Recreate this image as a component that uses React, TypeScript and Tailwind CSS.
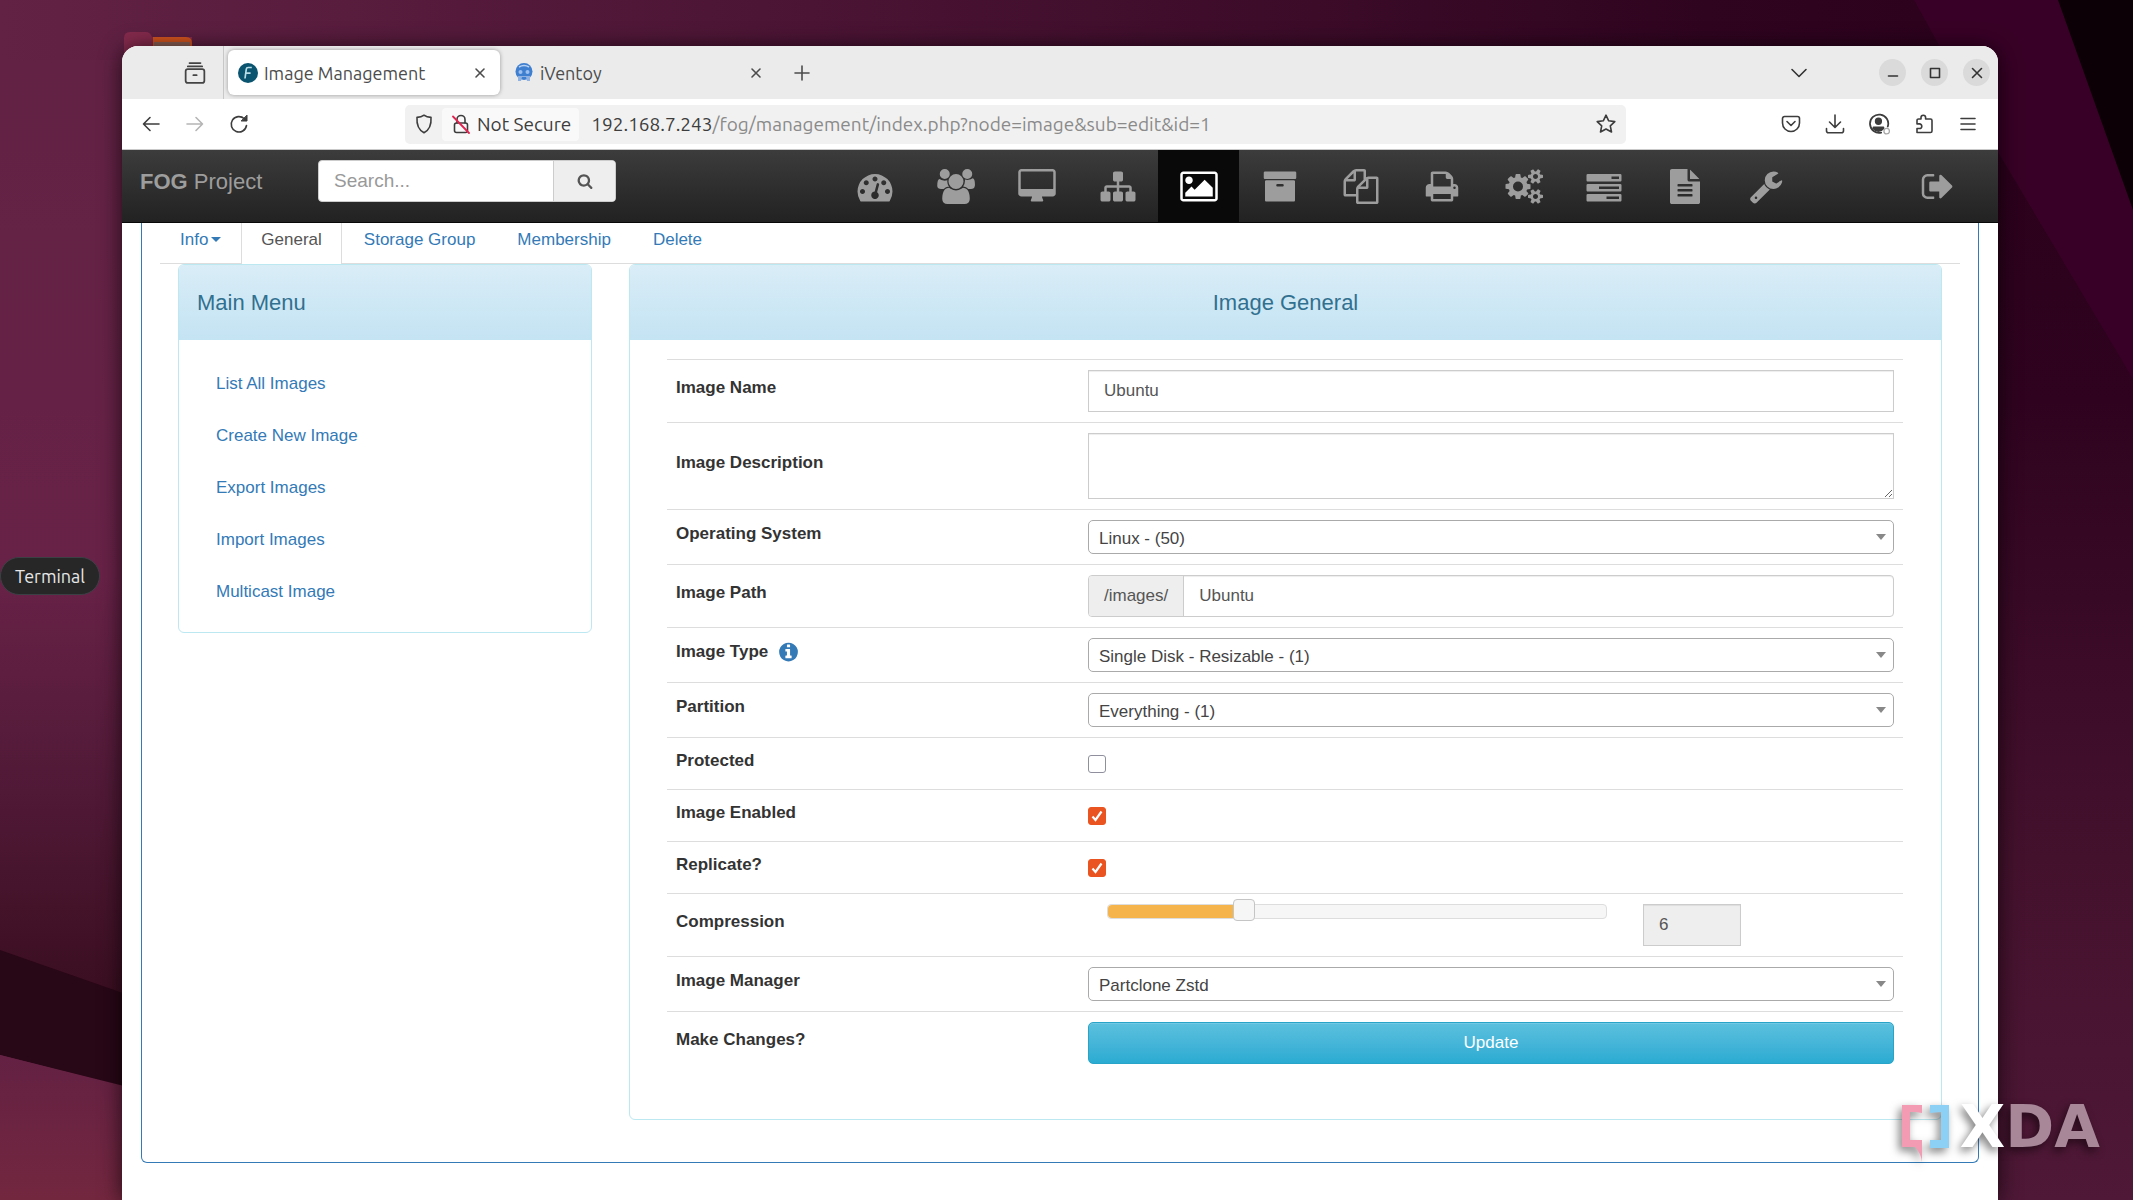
import { useState } from "react";
import type { ReactNode } from "react";

type NavItem = { label: string; path: string };

const navItems: NavItem[] = [
  {
    label: "Dashboard",
    path: "M384 1152q0-53-37.5-90.5t-90.5-37.5-90.5 37.5-37.5 90.5 37.5 90.5 90.5 37.5 90.5-37.5 37.5-90.5zm192-448q0-53-37.5-90.5t-90.5-37.5-90.5 37.5-37.5 90.5 37.5 90.5 90.5 37.5 90.5-37.5 37.5-90.5zm428 481l101-382q6-26-7.5-48.5t-38.5-29.5-48 6.5-30 39.5l-101 382q-60 5-107 43.5t-63 98.5q-20 77 20 146t117 89 146-20 89-117q16-60-6-117t-72-91zm660-33q0-53-37.5-90.5t-90.5-37.5-90.5 37.5-37.5 90.5 37.5 90.5 90.5 37.5 90.5-37.5 37.5-90.5zm-640-640q0-53-37.5-90.5t-90.5-37.5-90.5 37.5-37.5 90.5 37.5 90.5 90.5 37.5 90.5-37.5 37.5-90.5zm448 192q0-53-37.5-90.5t-90.5-37.5-90.5 37.5-37.5 90.5 37.5 90.5 90.5 37.5 90.5-37.5 37.5-90.5zm320 448q0 261-141 483-19 29-54 29h-1402q-35 0-54-29-141-221-141-483 0-182 71-348t191-286 286-191 348-71 348 71 286 191 191 286 71 348z",
  },
  {
    label: "Users",
    path: "M529 896q-162 5-265 128h-134q-82 0-138-40.5t-56-118.5q0-353 124-353 6 0 43.5 21t97.5 42.5 119 21.5q67 0 133-23-5 37-5 66 0 159 93 290zm1071 637q0 120-73 189.5t-194 69.5h-874q-121 0-194-69.5t-73-189.5q0-53 3.5-103.5t14-109 26.5-108.5 43-97.5 62-81 85.5-53.5 111.5-20q10 0 43 21.5t73 48 107 48 135 21.5 135-21.5 107-48 73-48 43-21.5q61 0 111.5 20t85.5 53.5 62 81 43 97.5 26.5 108.5 14 109 3.5 103.5zm-1024-1277q0 106-75 181t-181 75-181-75-75-181 75-181 181-75 181 75 75 181zm704 384q0 159-112.5 271.5t-271.5 112.5-271.5-112.5-112.5-271.5 112.5-271.5 271.5-112.5 271.5 112.5 112.5 271.5zm576 225q0 78-56 118.5t-138 40.5h-134q-103-123-265-128 93-131 93-290 0-29-5-66 66 23 133 23 59 0 119-21.5t97.5-42.5 43.5-21q124 0 124 353zm-128-609q0 106-75 181t-181 75-181-75-75-181 75-181 181-75 181 75 75 181z",
  },
  {
    label: "Hosts",
    path: "M1728 992v-832q0-13-9.5-22.5t-22.5-9.5h-1600q-13 0-22.5 9.5t-9.5 22.5v832q0 13 9.5 22.5t22.5 9.5h1600q13 0 22.5-9.5t9.5-22.5zm128-832v1088q0 66-47 113t-113 47h-544q0 37 16 77.5t32 71 16 43.5q0 26-19 45t-45 19h-512q-26 0-45-19t-19-45q0-14 16-44t32-70 16-78h-544q-66 0-113-47t-47-113v-1088q0-66 47-113t113-47h1600q66 0 113 47t47 113z",
  },
  {
    label: "Groups",
    path: "M1792 1248v320q0 40-28 68t-68 28h-320q-40 0-68-28t-28-68v-320q0-40 28-68t68-28h96v-192h-512v192h96q40 0 68 28t28 68v320q0 40-28 68t-68 28h-320q-40 0-68-28t-28-68v-320q0-40 28-68t68-28h96v-192h-512v192h96q40 0 68 28t28 68v320q0 40-28 68t-68 28h-320q-40 0-68-28t-28-68v-320q0-40 28-68t68-28h96v-192q0-52 38-90t90-38h512v-192h-96q-40 0-68-28t-28-68v-320q0-40 28-68t68-28h320q40 0 68 28t28 68v320q0 40-28 68t-68 28h-96v192h512q52 0 90 38t38 90v192h96q40 0 68 28t28 68z",
  },
  {
    label: "Images",
    path: "M576 576q0 80-56 136t-136 56-136-56-56-136 56-136 136-56 136 56 56 136zm1024 384v448h-1408v-192l320-320 160 160 512-512zm96-704h-1600q-13 0-22.5 9.5t-9.5 22.5v1216q0 13 9.5 22.5t22.5 9.5h1600q13 0 22.5-9.5t9.5-22.5v-1216q0-13-9.5-22.5t-22.5-9.5zm160 32v1216q0 66-47 113t-113 47h-1600q-66 0-113-47t-47-113v-1216q0-66 47-113t113-47h1600q66 0 113 47t47 113z",
  },
  {
    label: "Storage",
    path: "M1088 832q0-26-19-45t-45-19h-256q-26 0-45 19t-19 45 19 45 45 19h256q26 0 45-19t19-45zm576-192v960q0 26-19 45t-45 19h-1408q-26 0-45-19t-19-45v-960q0-26 19-45t45-19h1408q26 0 45 19t19 45zm64-448v256q0 26-19 45t-45 19h-1536q-26 0-45-19t-19-45v-256q0-26 19-45t45-19h1536q26 0 45 19t19 45z",
  },
  {
    label: "Snapins",
    path: "M1696 384q40 0 68 28t28 68v1216q0 40-28 68t-68 28h-960q-40 0-68-28t-28-68v-288h-544q-40 0-68-28t-28-68v-672q0-40 20-88t48-76l408-408q28-28 76-48t88-20h416q40 0 68 28t28 68v328q68-40 128-40h416zm-544 213l-299 299h299v-299zm-640-384l-299 299h299v-299zm196 647l316-316v-416h-384v416q0 40-28 68t-68 28h-416v640h512v-256q0-40 20-88t48-76zm956 804v-1152h-384v416q0 40-28 68t-68 28h-416v640h896z",
  },
  {
    label: "Printers",
    path: "M448 1536h896v-256h-896v256zm0-640h896v-384h-160q-40 0-68-28t-28-68v-160h-640v640zm1152 64q0-26-19-45t-45-19-45 19-19 45 19 45 45 19 45-19 19-45zm128 0v416q0 13-9.5 22.5t-22.5 9.5h-224v160q0 40-28 68t-68 28h-960q-40 0-68-28t-28-68v-160h-224q-13 0-22.5-9.5t-9.5-22.5v-416q0-79 56.5-135.5t135.5-56.5h64v-544q0-40 28-68t68-28h672q40 0 88 20t76 48l152 152q28 28 48 76t20 88v256h64q79 0 135.5 56.5t56.5 135.5z",
  },
  {
    label: "Services",
    path: "M896 896q0-106-75-181t-181-75-181 75-75 181 75 181 181 75 181-75 75-181zm768 512q0-52-38-90t-90-38-90 38-38 90q0 53 37.5 90.5t90.5 37.5 90.5-37.5 37.5-90.5zm0-1024q0-52-38-90t-90-38-90 38-38 90q0 53 37.5 90.5t90.5 37.5 90.5-37.5 37.5-90.5zm-384 421v185q0 10-7 19.5t-16 10.5l-155 24q-11 35-32 76 34 48 90 115 7 11 7 20 0 12-7 19-23 30-82.5 89.5t-78.5 59.5q-11 0-21-7l-115-90q-37 19-77 31-11 108-23 155-7 24-30 24h-186q-11 0-20-7.5t-10-17.5l-23-153q-34-10-75-31l-118 89q-7 7-20 7-11 0-21-8-144-133-144-160 0-9 7-19 10-14 41-53t47-61q-23-44-35-82l-152-24q-10-1-17-9.5t-7-19.5v-185q0-10 7-19.5t16-10.5l155-24q11-35 32-76-34-48-90-115-7-11-7-20 0-12 7-20 22-30 82-89t79-59q11 0 21 7l115 90q34-18 77-32 11-108 23-154 7-24 30-24h186q11 0 20 7.5t10 17.5l23 153q34 10 75 31l118-89q8-7 20-7 11 0 21 8 144 133 144 160 0 8-7 19-12 16-42 54t-45 60q23 48 34 82l152 23q10 2 17 10.5t7 19.5zm640 533v140q0 16-149 31-12 27-30 52 51 113 51 138 0 4-4 7-122 71-124 71-8 0-46-47t-52-68q-20 2-30 2t-30-2q-14 21-52 68t-46 47q-2 0-124-71-4-3-4-7 0-25 51-138-18-25-30-52-149-15-149-31v-140q0-16 149-31 13-29 30-52-51-113-51-138 0-4 4-7 4-2 35-20t59-34 30-16q8 0 46 46.5t52 67.5q20-2 30-2t30 2q51-71 92-112l6-2q4 0 124 70 4 3 4 7 0 25-51 138 17 23 30 52 149 15 149 31zm0-1024v140q0 16-149 31-12 27-30 52 51 113 51 138 0 4-4 7-122 71-124 71-8 0-46-47t-52-68q-20 2-30 2t-30-2q-14 21-52 68t-46 47q-2 0-124-71-4-3-4-7 0-25 51-138-18-25-30-52-149-15-149-31v-140q0-16 149-31 13-29 30-52-51-113-51-138 0-4 4-7 4-2 35-20t59-34 30-16q8 0 46 46.5t52 67.5q20-2 30-2t30 2q51-71 92-112l6-2q4 0 124 70 4 3 4 7 0 25-51 138 17 23 30 52 149 15 149 31z",
  },
  {
    label: "Tasks",
    path: "M1024 1536h640v-128h-640v128zm-384-512h1024v-128h-1024v128zm640-512h384v-128h-384v128zm512 832v256q0 26-19 45t-45 19h-1664q-26 0-45-19t-19-45v-256q0-26 19-45t45-19h1664q26 0 45 19t19 45zm0-512v256q0 26-19 45t-45 19h-1664q-26 0-45-19t-19-45v-256q0-26 19-45t45-19h1664q26 0 45 19t19 45zm0-512v256q0 26-19 45t-45 19h-1664q-26 0-45-19t-19-45v-256q0-26 19-45t45-19h1664q26 0 45 19t19 45z",
  },
  {
    label: "Reports",
    path: "M1596 476q14 14 28 36h-472v-472q22 14 36 28zm-476 164h544v1056q0 40-28 68t-68 28h-1344q-40 0-68-28t-28-68v-1600q0-40 28-68t68-28h800v544q0 40 28 68t68 28zm160 736v-64q0-14-9-23t-23-9h-704q-14 0-23 9t-9 23v64q0 14 9 23t23 9h704q14 0 23-9t9-23zm0-256v-64q0-14-9-23t-23-9h-704q-14 0-23 9t-9 23v64q0 14 9 23t23 9h704q14 0 23-9t9-23zm0-256v-64q0-14-9-23t-23-9h-704q-14 0-23 9t-9 23v64q0 14 9 23t23 9h704q14 0 23-9t9-23z",
  },
  {
    label: "Configuration",
    path: "M448 1472q0-26-19-45t-45-19-45 19-19 45 19 45 45 19 45-19 19-45zm644-420l-682 682q-37 37-90 37-52 0-91-37l-106-108q-38-36-38-90 0-53 38-91l681-681q39 98 114.5 173.5t173.5 114.5zm634-435q0 39-23 106-47 134-164.5 217.5t-258.5 83.5q-185 0-316.5-131.5t-131.5-316.5 131.5-316.5 316.5-131.5q58 0 121.5 16.5t107.5 46.5q16 11 16 28t-16 28l-293 169v224l193 107q5-3 79-48.5t135.5-81 70.5-35.5q15 0 23.5 10t8.5 25z",
  },
];

const signOutPath =
  "M704 1440q0 4 1 20t.5 26.5-3 23.5-10 19.5-20.5 6.5h-320q-119 0-203.5-84.5t-84.5-203.5v-704q0-119 84.5-203.5t203.5-84.5h320q13 0 22.5 9.5t9.5 22.5q0 4 1 20t.5 26.5-3 23.5-10 19.5-20.5 6.5h-320q-66 0-113 47t-47 113v704q0 66 47 113t113 47h312l11.5 1 11.5 3 8 5.5 7 9 2 13.5zm928-544q0 26-19 45l-544 544q-19 19-45 19t-45-19-19-45v-288h-448q-26 0-45-19t-19-45v-384q0-26 19-45t45-19h448v-288q0-26 19-45t45-19 45 19l544 544q19 19 19 45z";

const searchPath =
  "M1216 832q0-185-131.5-316.5t-316.5-131.5-316.5 131.5-131.5 316.5 131.5 316.5 316.5 131.5 316.5-131.5 131.5-316.5zm512 832q0 52-38 90t-90 38q-54 0-90-38l-343-342q-179 124-399 124-143 0-273.5-55.5t-225-150-150-225-55.5-273.5 55.5-273.5 150-225 225-150 273.5-55.5 273.5 55.5 225 150 150 225 55.5 273.5q0 220-124 399l343 343q37 37 37 90z";

const infoPath =
  "M1152 1376v-160q0-14-9-23t-23-9h-96v-512q0-14-9-23t-23-9h-320q-14 0-23 9t-9 23v160q0 14 9 23t23 9h96v320h-96q-14 0-23 9t-9 23v160q0 14 9 23t23 9h448q14 0 23-9t9-23zm-128-896v-160q0-14-9-23t-23-9h-192q-14 0-23 9t-9 23v160q0 14 9 23t23 9h192q14 0 23-9t9-23zm640 416q0 209-103 385.5t-279.5 279.5-385.5 103-385.5-103-279.5-279.5-103-385.5 103-385.5 279.5-279.5 385.5-103 385.5 103 279.5 279.5 103 385.5z";

const menuLinks = [
  "List All Images",
  "Create New Image",
  "Export Images",
  "Import Images",
  "Multicast Image",
];

const uiFont = "font-['Ubuntu','Noto_Sans',sans-serif]";

const inputClass =
  "h-[42px] w-full border border-[#ccc] bg-white px-[15px] text-[#555] shadow-[inset_0_1px_1px_rgba(0,0,0,0.075)]";

function Glyph({ path, className }: { path: string; className: string }) {
  return (
    <svg viewBox="-128 0 2048 1792" fill="currentColor" aria-hidden className={className}>
      <path d={path} />
    </svg>
  );
}

function LineIcon({ children, size = "size-5" }: { children: ReactNode; size?: string }) {
  return (
    <svg
      viewBox="0 0 20 20"
      fill="none"
      stroke="currentColor"
      strokeWidth="1.6"
      strokeLinecap="round"
      strokeLinejoin="round"
      aria-hidden
      className={size}
    >
      {children}
    </svg>
  );
}

function IconButton({
  label,
  className = "w-11",
  children,
}: {
  label: string;
  className?: string;
  children: ReactNode;
}) {
  return (
    <button type="button" aria-label={label} className={`flex h-8 shrink-0 items-center justify-center ${className}`}>
      {children}
    </button>
  );
}

function Wallpaper() {
  return (
    <svg
      viewBox="0 0 2133 1200"
      preserveAspectRatio="none"
      aria-hidden
      className="absolute inset-0 h-full w-full"
    >
      <defs>
        <linearGradient id="sky" x1="0" x2="1" y1="0" y2="0">
          <stop offset="0" stopColor="#622244" />
          <stop offset="0.38" stopColor="#4b1434" />
          <stop offset="0.8" stopColor="#2f041f" />
          <stop offset="1" stopColor="#2a001b" />
        </linearGradient>
        <linearGradient id="left" x1="0" x2="0" y1="0" y2="1">
          <stop offset="0" stopColor="#622244" />
          <stop offset="0.55" stopColor="#682247" />
          <stop offset="0.78" stopColor="#501936" />
          <stop offset="1" stopColor="#3a0e20" />
        </linearGradient>
        <linearGradient id="right" x1="0" x2="0" y1="0" y2="1">
          <stop offset="0" stopColor="#29001a" />
          <stop offset="0.3" stopColor="#2f031f" />
          <stop offset="0.7" stopColor="#44112d" />
          <stop offset="1" stopColor="#4e1836" />
        </linearGradient>
        <linearGradient id="floor" x1="0" x2="0" y1="0" y2="1">
          <stop offset="0" stopColor="#642143" />
          <stop offset="1" stopColor="#73273f" />
        </linearGradient>
      </defs>
      <rect width="2133" height="1200" fill="url(#sky)" />
      <rect y="60" width="140" height="940" fill="url(#left)" />
      <path d="M0 950 140 999V1091L0 1055Z" fill="#280716" />
      <path d="M0 1055 140 1090V1200H0Z" fill="url(#floor)" />
      <rect x="1980" y="60" width="153" height="1140" fill="url(#right)" />
      <path d="M1914 0H2133V379L1998 152Z" fill="#380026" />
      <path d="M2058 0H2133V210Z" fill="#0c0006" />
      <path d="M124 60V38q0-6 6-6h16q4 0 6 5h40v23z" fill="#842a4c" />
      <path d="M153 37h33q6 0 6 6v17h-39z" fill="#d2541f" />
      <path d="M154 42h36v18h-36z" fill="#8b5f55" />
    </svg>
  );
}

function TabStrip() {
  return (
    <div className={`flex h-[53px] items-center bg-[#ebebeb] text-lg text-[#4c4c4c] ${uiFont}`}>
      <div className="flex h-full w-[102px] shrink-0 items-center justify-end border-r border-[#c8c8c8] pr-[17px]">
        <button type="button" aria-label="Recent browsing" className="text-[#444]">
          <LineIcon size="size-[22px]">
            <path d="M5 1h10M3.500 4h13" />
            <rect x="1.500" y="6.500" width="17" height="12.500" rx="2" />
            <path d="M8.500 12h3" />
          </LineIcon>
        </button>
      </div>
      <div className="ml-1 flex h-[45px] w-[272px] shrink-0 items-center rounded-md bg-white pr-2 pl-[10px] shadow-[0_0_4px_rgba(0,0,0,0.35)]">
        <svg viewBox="0 0 20 20" aria-hidden className="size-5 shrink-0">
          <circle cx="10" cy="10" r="10" fill="#0a5470" />
          <path d="M7 15.500 8.300 6q.2-1.500 1.800-1.500h3.700M8 10.200h4.600" fill="none" stroke="#b9dde6" strokeWidth="1.700" />
        </svg>
        <span className="ml-1.5 flex-1 whitespace-nowrap">Image Management</span>
        <IconButton label="Close Image Management" className="w-6">
          <LineIcon size="size-4">
            <path d="M5 5l10 10M15 5 5 15" strokeWidth="2" />
          </LineIcon>
        </IconButton>
      </div>
      <div className="flex h-[45px] w-[276px] shrink-0 items-center pr-2 pl-[14px]">
        <svg viewBox="0 0 20 20" aria-hidden className="size-5 shrink-0">
          <circle cx="10" cy="8.500" r="8.500" fill="#3f7fd0" />
          <path d="M4 13v5h3l1-4h4l1 4h3v-5z" fill="#8fb2e2" />
          <path d="M5 4q5-3 10 0" fill="none" stroke="#b5d0f2" strokeWidth="1.500" />
          <circle cx="6.500" cy="9" r="2" fill="#9dc0ee" />
          <circle cx="13.500" cy="9" r="2" fill="#9dc0ee" />
        </svg>
        <span className="ml-1.5 flex-1">iVentoy</span>
        <IconButton label="Close iVentoy" className="w-6">
          <LineIcon size="size-4">
            <path d="M5 5l10 10M15 5 5 15" strokeWidth="2" />
          </LineIcon>
        </IconButton>
      </div>
      <IconButton label="New tab" className="w-[52px]">
        <LineIcon>
          <path d="M10 3v14M3 10h14" />
        </LineIcon>
      </IconButton>
      <div className="ml-auto flex items-center text-[#333]">
        <IconButton label="List all tabs" className="mr-[62px] w-9">
          <LineIcon>
            <path d="M3 6.500l7 7 7-7" />
          </LineIcon>
        </IconButton>
        <div className="flex items-center gap-[15px] pr-[8px]">
          <button type="button" aria-label="Minimize" className="flex size-[27px] items-center justify-center rounded-full bg-[#dadada]">
            <LineIcon>
              <path d="M5.500 13h9" />
            </LineIcon>
          </button>
          <button type="button" aria-label="Maximize" className="flex size-[27px] items-center justify-center rounded-full bg-[#dadada]">
            <LineIcon>
              <path d="M5.500 5.500h9v9h-9z" />
            </LineIcon>
          </button>
          <button type="button" aria-label="Close window" className="flex size-[27px] items-center justify-center rounded-full bg-[#dadada]">
            <LineIcon>
              <path d="M5.500 5.500l9 9M14.500 5.500l-9 9" />
            </LineIcon>
          </button>
        </div>
      </div>
    </div>
  );
}

function AddressBar() {
  return (
    <div className={`flex h-[51px] items-center border-b border-[#c9c9c9] bg-white pl-[7px] text-[19px] text-[#3d3d3d] ${uiFont}`}>
      <IconButton label="Back">
        <LineIcon>
          <path d="M18 10H2.500M9 3.500 2.500 10 9 16.500" />
        </LineIcon>
      </IconButton>
      <IconButton label="Forward">
        <span className="text-[#b5b5b5]">
          <LineIcon>
            <path d="M2 10h15.500M11 3.500l6.500 6.500-6.500 6.500" />
          </LineIcon>
        </span>
      </IconButton>
      <IconButton label="Reload">
        <LineIcon>
          <path d="M17.500 11.500a7.700 7.700 0 1 1-2.200-6.700l1.500 1.500" />
          <path d="M18 1.500v5.500h-5.500z" fill="currentColor" strokeWidth="1" />
        </LineIcon>
      </IconButton>
      <div className="ml-[144px] flex h-[39px] flex-1 items-center rounded-[5px] bg-[#f1f1f1] pr-1 pl-[9px]">
        <LineIcon>
          <path d="M10 1.200c2 1.500 4.500 2.100 7 2.200.5 7-1.500 12.500-7 15.400C4.500 15.900 2.500 10.400 3 3.400c2.500-.1 5-.7 7-2.200z" />
        </LineIcon>
        <button type="button" className="ml-2 flex h-[33px] shrink-0 items-center gap-1.5 rounded bg-[#f9f9f9] pr-2 pl-[9px] whitespace-nowrap">
          <LineIcon>
            <path d="M6 9V5.500a4 4 0 0 1 8 0V9" />
            <rect x="3.500" y="9" width="13" height="9.500" rx="2" />
            <path d="M2 2.500 18 19" stroke="#e2234f" strokeWidth="1.800" />
          </LineIcon>
          Not Secure
        </button>
        <div className="ml-3 flex-1 whitespace-nowrap">
          192.168.7.243<span className="text-[#8a8a8a]">/fog/management/index.php?node=image&amp;sub=edit&amp;id=1</span>
        </div>
        <IconButton label="Bookmark this page" className="w-8">
          <LineIcon>
            <path d="M10 1.200l2.700 5.600 6.100.8-4.500 4.200 1.200 6.200L10 15l-5.500 3 1.200-6.200L1.200 7.600l6.100-.8z" />
          </LineIcon>
        </IconButton>
      </div>
      <div className="ml-[143px] flex shrink-0 pr-2">
        <IconButton label="Save to Pocket">
          <LineIcon>
            <path d="M3.500 2.500h13a2 2 0 0 1 2 2V9a8.500 8.500 0 0 1-17 0V4.500a2 2 0 0 1 2-2z" />
            <path d="M6 7.500l4 4 4-4" />
          </LineIcon>
        </IconButton>
        <IconButton label="Downloads">
          <LineIcon>
            <path d="M10 1v12M4.500 8l5.500 5.500L15.500 8M1.500 14.500v2.200a2 2 0 0 0 2 2h13a2 2 0 0 0 2-2v-2.200" />
          </LineIcon>
        </IconButton>
        <IconButton label="Account">
          <LineIcon size="size-[22px]">
            <path d="M12 17.800a8.300 8.300 0 1 1 6-5.500" />
            <circle cx="9.500" cy="7.500" r="2.500" fill="currentColor" />
            <path d="M5 13h9v1q-2 2.500-4.500 2.500T5 14z" fill="currentColor" />
            <circle cx="17" cy="16.500" r="2.500" stroke="#aaa" strokeWidth="1.200" />
          </LineIcon>
        </IconButton>
        <IconButton label="Extensions" className="w-[45px]">
          <LineIcon>
            <path d="M3 18.500v-4h2.500a2.300 2.300 0 0 0 0-4.600H3V6.500a1.500 1.500 0 0 1 1.500-1.500H7V3.500a2.300 2.300 0 0 1 4.600 0V5h4.900A1.500 1.500 0 0 1 18 6.500V17a1.500 1.500 0 0 1-1.500 1.500z" />
          </LineIcon>
        </IconButton>
        <IconButton label="Menu">
          <LineIcon>
            <path d="M3 4.500h14M3 10h14M3 15.500h14" />
          </LineIcon>
        </IconButton>
      </div>
    </div>
  );
}

function Navbar() {
  return (
    <header className="flex h-[73px] items-stretch border-b border-[#080808] bg-linear-to-b from-[#3c3c3c] to-[#222] pr-5 pl-[18px] text-[#9d9d9d]">
      <a href="#home" className="mt-4 h-8 w-[178px] shrink-0 text-[22px] leading-8 whitespace-nowrap">
        <b>FOG</b> Project
      </a>
      <form className="mt-[10px] flex h-[42px] w-[298px] shrink-0 overflow-hidden rounded border border-[#ccc] bg-white">
        <input
          type="text"
          aria-label="Search"
          placeholder="Search..."
          className="w-0 flex-1 px-[15px] text-[19px] placeholder:text-[#999]"
        />
        <button
          type="submit"
          aria-label="Search"
          className="flex w-[62px] items-center justify-center border-l border-[#ccc] bg-[#eee] text-[#555]"
        >
          <Glyph path={searchPath} className="h-4 w-5" />
        </button>
      </form>
      <nav className="ml-[218px] flex">
        {navItems.map((item) => (
          <a
            key={item.label}
            href={`#${item.label.toLowerCase()}`}
            aria-label={item.label}
            className={`flex w-[81px] items-center justify-center ${
              item.label === "Images" ? "bg-[#090909] text-white" : ""
            }`}
          >
            <Glyph path={item.path} className="h-[35px] w-10" />
          </a>
        ))}
      </nav>
      <a href="#logout" aria-label="Logout" className="ml-auto flex w-[81px] items-center justify-center">
        <Glyph path={signOutPath} className="h-[35px] w-10" />
      </a>
    </header>
  );
}

function Tabs() {
  return (
    <nav className="flex h-[41px] border-b border-[#ddd] text-[#337ab7]">
      <a href="#info" className="flex h-[33px] items-center px-5">
        Info
        <span className="ml-[3px] border-x-[5px] border-t-[5px] border-x-transparent border-t-[#337ab7]" />
      </a>
      <a href="#general" className="mr-[2px] h-[41px] border-x border-[#ddd] bg-white px-[19px] leading-[33px] text-[#555]">
        General
      </a>
      <a href="#storage" className="mr-[2px] px-5 leading-[33px]">
        Storage Group
      </a>
      <a href="#membership" className="mr-[2px] px-5 leading-[33px]">
        Membership
      </a>
      <a href="#delete" className="px-5 leading-[33px]">
        Delete
      </a>
    </nav>
  );
}

function Panel({
  title,
  centered,
  className,
  children,
}: {
  title: string;
  centered?: boolean;
  className: string;
  children: ReactNode;
}) {
  return (
    <section className={`rounded-md border border-[#bce8f1] bg-white ${className}`}>
      <h4
        className={`h-[75px] rounded-t-[5px] bg-linear-to-b from-[#d9edf7] to-[#c4e3f3] px-[18px] text-[22px] leading-[75px] text-[#31708f] ${
          centered ? "text-center" : ""
        }`}
      >
        {title}
      </h4>
      {children}
    </section>
  );
}

function Row({
  label,
  htmlFor,
  extra,
  children,
}: {
  label: string;
  htmlFor: string;
  extra?: ReactNode;
  children: ReactNode;
}) {
  return (
    <div className="grid grid-cols-3 border-t border-[#ddd]">
      <div className="flex items-center gap-2 px-[9px] pb-1.5">
        <label htmlFor={htmlFor} className="font-bold text-[#333]">
          {label}
        </label>
        {extra}
      </div>
      <div className="col-span-2 px-[9px] py-[10px]">{children}</div>
    </div>
  );
}

function Select({ id, value }: { id: string; value: string }) {
  return (
    <div className="relative">
      <select
        id={id}
        defaultValue={value}
        className="block h-[34px] w-full appearance-none rounded-[5px] border border-[#aaa] bg-white pt-1 pr-7 pl-[10px] text-[#444]"
      >
        <option>{value}</option>
      </select>
      <span className="pointer-events-none absolute top-[14px] right-2 border-x-[5px] border-t-[6px] border-x-transparent border-t-[#888]" />
    </div>
  );
}

function Checkbox({ id, checked }: { id: string; checked?: boolean }) {
  return (
    <div className="relative flex h-[31px] items-center">
      <input
        id={id}
        type="checkbox"
        defaultChecked={checked}
        className="peer size-[18px] appearance-none rounded-[3px] border border-[#8f8f9d] bg-white checked:border-[#e95420] checked:bg-[#e95420]"
      />
      <svg
        viewBox="0 0 18 18"
        aria-hidden
        className="pointer-events-none invisible absolute left-0 size-[18px] peer-checked:visible"
      >
        <path d="M4.500 9.500l3 3.500 6-8.500" fill="none" stroke="#fff" strokeWidth="2.200" />
      </svg>
    </div>
  );
}

function Compression() {
  const [level, setLevel] = useState(6);

  return (
    <div className="flex items-start pl-[19px]">
      <div className="relative h-[15px] w-[500px] rounded border border-[#ddd] bg-[#f6f6f6]">
        <div className="h-full rounded-l bg-[#f6b44c]" style={{ width: `${(level / 22) * 100}%` }} />
        {/* The input overhangs the track so the handle can be centred on either end */}
        <input
          id="compression"
          type="range"
          min={0}
          max={22}
          value={level}
          onChange={(e) => setLevel(Number(e.target.value))}
          className="absolute -top-[6px] -left-[11px] h-[22px] w-[calc(100%+22px)] appearance-none bg-transparent [&::-webkit-slider-thumb]:size-[22px] [&::-webkit-slider-thumb]:appearance-none [&::-webkit-slider-thumb]:rounded [&::-webkit-slider-thumb]:border [&::-webkit-slider-thumb]:border-[#c5c5c5] [&::-webkit-slider-thumb]:bg-[#f6f6f6]"
        />
      </div>
      <input
        type="text"
        readOnly
        aria-label="Compression level"
        value={level}
        className="ml-9 h-[42px] w-[98px] border border-[#ccc] bg-[#eee] px-[15px] text-[#555] shadow-[inset_0_1px_1px_rgba(0,0,0,0.075)]"
      />
    </div>
  );
}

function ImageForm() {
  return (
    <form className="pt-[19px] pr-[38px] pb-[45px] pl-[37px]" onSubmit={(e) => e.preventDefault()}>
      <Row label="Image Name" htmlFor="name">
        <input id="name" type="text" defaultValue="Ubuntu" className={inputClass} />
      </Row>
      <Row label="Image Description" htmlFor="description">
        <textarea
          id="description"
          className="block h-[66px] w-full resize-y border border-[#ccc] bg-white px-[15px] py-2 text-[#555] shadow-[inset_0_1px_1px_rgba(0,0,0,0.075)]"
        />
      </Row>
      <Row label="Operating System" htmlFor="os">
        <Select id="os" value="Linux - (50)" />
      </Row>
      <Row label="Image Path" htmlFor="path">
        <div className="flex h-[42px] overflow-hidden rounded border border-[#ccc] shadow-[inset_0_1px_1px_rgba(0,0,0,0.075)]">
          <span className="flex items-center border-r border-[#ccc] bg-[#eee] px-[15px] text-[#555]">/images/</span>
          <input id="path" type="text" defaultValue="Ubuntu" className="min-w-0 flex-1 px-[15px] text-[#555]" />
        </div>
      </Row>
      <Row
        label="Image Type"
        htmlFor="type"
        extra={
          <span title="Image type help" className="text-[#337ab7]">
            <Glyph path={infoPath} className="h-[22px] w-[25px]" />
          </span>
        }
      >
        <Select id="type" value="Single Disk - Resizable - (1)" />
      </Row>
      <Row label="Partition" htmlFor="partition">
        <Select id="partition" value="Everything - (1)" />
      </Row>
      <Row label="Protected" htmlFor="protected">
        <Checkbox id="protected" />
      </Row>
      <Row label="Image Enabled" htmlFor="enabled">
        <Checkbox id="enabled" checked />
      </Row>
      <Row label="Replicate?" htmlFor="replicate">
        <Checkbox id="replicate" checked />
      </Row>
      <Row label="Compression" htmlFor="compression">
        <Compression />
      </Row>
      <Row label="Image Manager" htmlFor="manager">
        <Select id="manager" value="Partclone Zstd" />
      </Row>
      <Row label="Make Changes?" htmlFor="update">
        <button
          id="update"
          type="submit"
          className="h-[42px] w-full rounded-[5px] border border-[#28a4c9] bg-linear-to-b from-[#5bc0de] to-[#2aabd2] text-white shadow-[inset_0_1px_0_rgba(255,255,255,0.15)]"
        >
          Update
        </button>
      </Row>
    </form>
  );
}

function Watermark() {
  return (
    <div className="absolute right-[33px] bottom-[36px] flex h-[60px] items-start gap-[10px] drop-shadow-[-3px_4px_4px_rgba(0,0,0,0.5)]">
      <svg viewBox="0 0 48 58" aria-hidden className="h-[58px] w-12">
        <path d="M0 1h20v8l-6-1H8v28h12v22q-1-9-7-15H0z" fill="#f29bb2" />
        <path d="M28 1h19v43H28v-8h11V8l-11 1z" fill="#8dd0f5" />
      </svg>
      <span className="font-['DejaVu_Sans',sans-serif] text-[59px] leading-[46px] font-bold text-[#a88799]">
        <span className="text-white">X</span>DA
      </span>
    </div>
  );
}

export default function App() {
  return (
    <div className="relative flex h-screen flex-col overflow-hidden bg-[#4b1434] font-['Liberation_Sans',Arial,sans-serif] text-[17px] leading-7">
      <Wallpaper />

      {/* Browser window */}
      <div className="relative mt-[46px] mr-[135px] ml-[122px] flex-1 overflow-hidden rounded-t-2xl bg-white shadow-[0_2px_22px_rgba(0,0,0,0.7)]">
        <TabStrip />
        <AddressBar />
        <Navbar />

        {/* Page content */}
        <main className="mx-[19px] rounded-b-md border-x border-b border-[#337ab7] px-[18px] pb-[42px]">
          <Tabs />
          <div className="flex items-start gap-[37px] px-[18px]">
            <Panel title="Main Menu" className="w-[414px] shrink-0">
              <ul className="px-[37px] pt-[18px] pb-[14px] text-[#337ab7]">
                {menuLinks.map((link) => (
                  <li key={link} className="h-[52px] leading-[52px]">
                    <a href="#images">{link}</a>
                  </li>
                ))}
              </ul>
            </Panel>
            <Panel title="Image General" centered className="min-w-0 flex-1">
              <ImageForm />
            </Panel>
          </div>
        </main>
      </div>

      {/* Dock tooltip */}
      <div
        className={`absolute top-[557px] left-0 rounded-full border border-[#3b4045] bg-[#262726] px-[14px] text-lg leading-[36px] text-[#e8e8e8] ${uiFont}`}
      >
        Terminal
      </div>

      <Watermark />
    </div>
  );
}
